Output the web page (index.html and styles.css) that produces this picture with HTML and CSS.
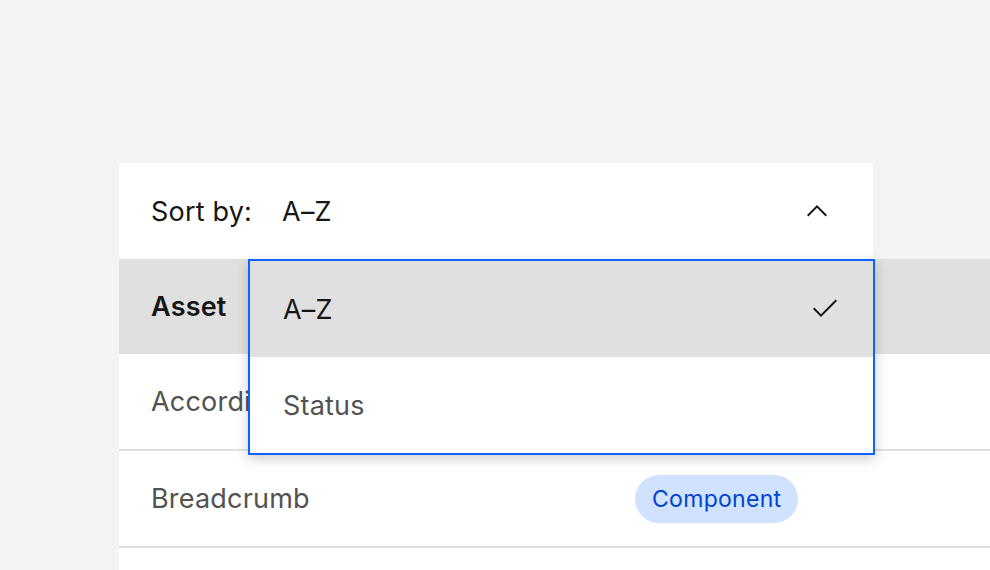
FILE: index.html
```html
<!DOCTYPE html>
<html lang="en">
<head>
  <meta charset="UTF-8" />
  <title>Assets</title>
  <link rel="stylesheet" href="styles.css">
</head>
<body>
  <div class="page">
    <div class="panel">
      <div class="toolbar">
        <span class="sort-label">Sort by:</span>
        <button class="sort-field">
          <span class="sort-value">A–Z</span>
          <svg class="chevron" width="32" height="32" viewBox="0 0 16 16" fill="#161616"><path d="M8 5L13 10 12.3 10.7 8 6.4 3.7 10.7 3 10z"/></svg>
        </button>
        <div class="menu">
          <div class="menu-item selected">
            <span>A–Z</span>
            <svg class="check" width="32" height="32" viewBox="0 0 16 16" fill="#161616"><path d="M6 10.6L2.7 7.3 2 8l4 4 8-8-.7-.7z"/></svg>
          </div>
          <div class="menu-item"><span>Status</span></div>
        </div>
      </div>

      <div class="table">
        <div class="row head">
          <div class="cell name">Asset</div>
          <div class="cell">Type</div>
        </div>
        <div class="row">
          <div class="cell name">Accordion</div>
          <div class="cell"><span class="tag">Component</span></div>
        </div>
        <div class="row">
          <div class="cell name">Breadcrumb</div>
          <div class="cell"><span class="tag">Component</span></div>
        </div>
        <div class="row last"></div>
      </div>
    </div>
  </div>
</body>
</html>
```

FILE: styles.css
```css
* { margin: 0; padding: 0; box-sizing: border-box; }
body {
  font-family: Inter, Roboto, sans-serif;
  background: #f4f4f4; color: #161616;
  height: 570px; overflow: hidden;
}
.page { padding: 163px 0 0 119px; }
.panel { width: 871px; }

.toolbar { position: relative; width: 754px; height: 96px; background: #fff;
  display: flex; align-items: center; padding-left: 32px;
}
.sort-label { flex: 0 0 97px; white-space: nowrap; font-size: 27px; letter-spacing: 0.2px; }
.sort-field { flex: 1; height: 100%; display: flex; align-items: center; justify-content: space-between;
  background: none; border: none; font: inherit; color: #161616;
  padding: 0 40px 0 30px; cursor: pointer;
}
.sort-value { font-size: 27px; letter-spacing: 0.2px; }
.chevron { display: block; }

.menu { position: absolute; top: 96px; left: 129px; width: 627px; z-index: 10;
  border: 2px solid #0f62fe; background: #fff;
  box-shadow: 0 4px 12px rgba(0,0,0,0.2);
}
.menu-item { height: 96px; display: flex; align-items: center; justify-content: space-between;
  padding: 0 32px 0 33px; font-size: 27px; letter-spacing: 0.2px; color: #525252;
}
.menu-item.selected { background: #e0e0e0; color: #161616; }
.check { display: block; }

.table { background: #fff; }
.row { display: flex; height: 97px; border-bottom: 2px solid #e0e0e0; }
.row.head { height: 95px; background: #e0e0e0; border-bottom: none; }
.row.last { height: 22px; border-bottom: none; }
.cell { display: flex; align-items: center; padding: 0 32px; font-size: 27px;
  letter-spacing: 0.2px; color: #525252; white-space: nowrap;
}
.cell.name { width: 484px; }
.head .cell { color: #161616; font-weight: 600; }
.tag { display: inline-flex; align-items: center; height: 48px; padding: 0 17px;
  border-radius: 24px; background: #d0e2ff; color: #0043ce;
  font-size: 23px; letter-spacing: 0.3px;
}
```
